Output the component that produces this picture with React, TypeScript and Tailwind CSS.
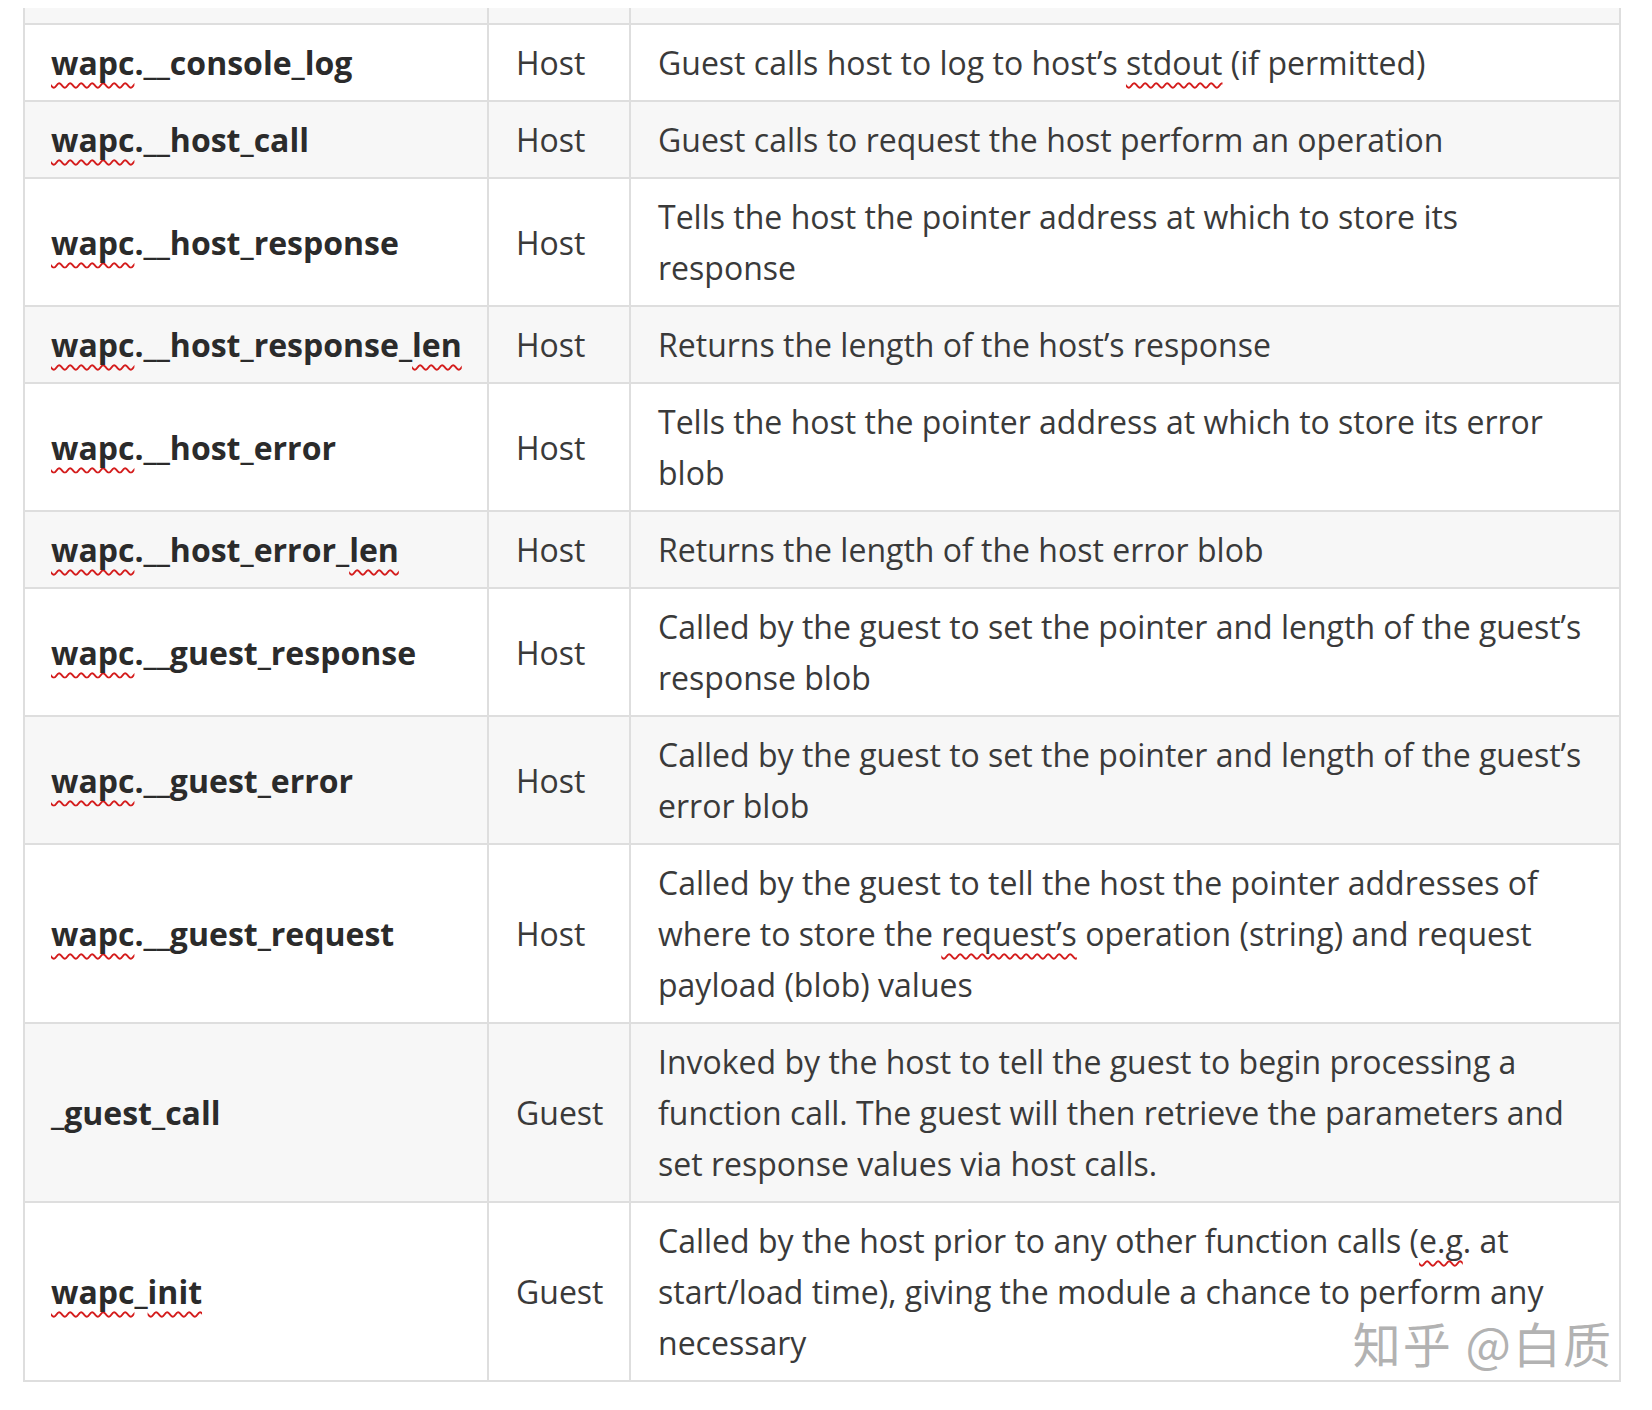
import React from 'react';

// spellcheck-style red squiggle under a word
const Sq: React.FC<{ children: React.ReactNode }> = ({ children }) => (
  <span className="underline decoration-wavy decoration-[#d41c1c] decoration-[1.5px] underline-offset-[7px] [text-decoration-skip-ink:none]">
    {children}
  </span>
);

interface Row {
  name: React.ReactNode;
  side: string;
  desc: React.ReactNode;
}

const rows: Row[] = [
  {
    name: <><Sq>wapc</Sq>.__console_log</>,
    side: 'Host',
    desc: <>Guest calls host to log to host’s <Sq>stdout</Sq> (if permitted)</>,
  },
  {
    name: <><Sq>wapc</Sq>.__host_call</>,
    side: 'Host',
    desc: 'Guest calls to request the host perform an operation',
  },
  {
    name: <><Sq>wapc</Sq>.__host_response</>,
    side: 'Host',
    desc: <>Tells the host the pointer address at which to store its<br />response</>,
  },
  {
    name: <><Sq>wapc</Sq>.__host_response_<Sq>len</Sq></>,
    side: 'Host',
    desc: 'Returns the length of the host’s response',
  },
  {
    name: <><Sq>wapc</Sq>.__host_error</>,
    side: 'Host',
    desc: <>Tells the host the pointer address at which to store its error<br />blob</>,
  },
  {
    name: <><Sq>wapc</Sq>.__host_error_<Sq>len</Sq></>,
    side: 'Host',
    desc: 'Returns the length of the host error blob',
  },
  {
    name: <><Sq>wapc</Sq>.__guest_response</>,
    side: 'Host',
    desc: <>Called by the guest to set the pointer and length of the guest’s<br />response blob</>,
  },
  {
    name: <><Sq>wapc</Sq>.__guest_error</>,
    side: 'Host',
    desc: <>Called by the guest to set the pointer and length of the guest’s<br />error blob</>,
  },
  {
    name: <><Sq>wapc</Sq>.__guest_request</>,
    side: 'Host',
    desc: (
      <>
        Called by the guest to tell the host the pointer addresses of<br />
        where to store the <Sq>request’s</Sq> operation (string) and request<br />
        payload (blob) values
      </>
    ),
  },
  {
    name: '_guest_call',
    side: 'Guest',
    desc: (
      <>
        Invoked by the host to tell the guest to begin processing a<br />
        function call. The guest will then retrieve the parameters and<br />
        set response values via host calls.
      </>
    ),
  },
  {
    name: <><Sq>wapc</Sq>_<Sq>init</Sq></>,
    side: 'Guest',
    desc: (
      <>
        Called by the host prior to any other function calls (<Sq>e.g</Sq>. at<br />
        start/load time), giving the module a chance to perform any<br />
        necessary
      </>
    ),
  },
];

export default function App() {
  return (
    <div
      className="w-[1652px] h-[1410px] bg-white overflow-hidden"
      style={{ fontFamily: '"Open Sans", "Noto Sans", sans-serif' }}
    >
      <div className="relative ml-[23px] mt-[8px] w-[1598px] border-l-2 border-[#dedede]">
        {/* header row, cut off at the top of the shot */}
        <div className="grid grid-cols-[464px_142px_990px] bg-[#f7f7f7]">
          <div className="h-[17px] border-r-2 border-b-2 border-[#dedede]" />
          <div className="h-[17px] border-r-2 border-b-2 border-[#dedede]" />
          <div className="h-[17px] border-r-2 border-b-2 border-[#dedede]" />
        </div>

        {rows.map((r, i) => (
          <div
            key={i}
            className={`grid grid-cols-[464px_142px_990px] text-[32px] leading-[51px] ${i % 2 === 1 ? 'bg-[#f7f7f7]' : 'bg-white'}`}
          >
            <div className="flex items-center pl-[26px] pr-3 py-3 border-r-2 border-b-2 border-[#dedede] font-bold text-[#2b2b2b] whitespace-nowrap">
              <span>{r.name}</span>
            </div>
            <div className="flex items-center pl-[27px] py-3 border-r-2 border-b-2 border-[#dedede] text-[#3a3a3a]">
              {r.side}
            </div>
            <div className="flex items-center pl-[27px] pr-6 py-3 border-r-2 border-b-2 border-[#dedede] text-[#3a3a3a]">
              <div>{r.desc}</div>
            </div>
          </div>
        ))}

        {/* watermark */}
        <div
          className="absolute right-[8px] bottom-[16px] text-[48px] leading-none text-[#b2b2b2] tracking-[2px]"
          style={{ fontFamily: '"Noto Sans CJK SC", "Noto Sans", sans-serif' }}
        >
          知乎 @白质
        </div>
      </div>
    </div>
  );
}
